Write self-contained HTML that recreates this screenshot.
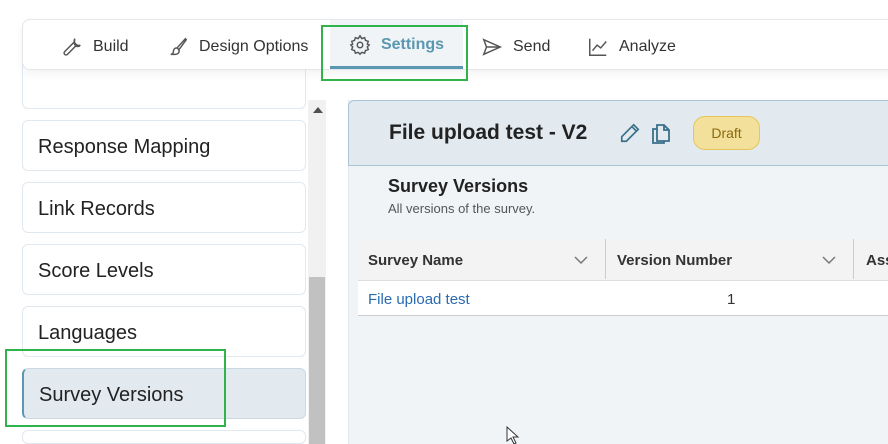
<!DOCTYPE html>
<html><head><style>
*{box-sizing:border-box;margin:0;padding:0}
html,body{width:888px;height:444px;overflow:hidden}
body{background:#fff;font-family:"Liberation Sans",sans-serif;position:relative;color:#222}
.abs{position:absolute}
.nav{left:22px;top:19px;width:900px;height:51px;border:1px solid #e3e6ea;border-radius:8px;background:#fff;box-shadow:0 4px 10px rgba(0,0,0,.05);z-index:5}
.tab{position:absolute;top:0;height:49px;display:flex;align-items:center;font-size:16px;color:#333;gap:10px;padding-top:4px}
.item{position:absolute;left:22px;width:284px;height:51px;border:1px solid #e1e8ee;border-radius:6px;background:#fff;font-size:20px;color:#222;padding-left:15px;line-height:53px}
</style></head><body>
<div class="abs nav">
 <div class="tab" style="left:38px"><svg width="22" height="22" viewBox="0 0 24 24" fill="none" stroke="#555" stroke-width="1.6"><path d="M14.7 6.3a4 4 0 0 0 5 5L21 10a5 5 0 0 1-6-7zM14.7 6.3L4 17a2 2 0 0 0 3 3l10.7-10.7"/></svg>Build</div>
 <div class="tab" style="left:144px"><svg width="22" height="22" viewBox="0 0 24 24" fill="none" stroke="#555" stroke-width="1.6"><path d="M20 3l-9 10 2 2 8-11zM11 13c-3 0-4 2-4 4s-2 3-3 3h5c3 0 5-2 4-5z"/></svg>Design Options</div>
 <div class="tab" style="left:307px;width:133px;background:#f0f4f7;border-bottom:3px solid #5b97b0;justify-content:center;color:#5b97b0;font-weight:bold;height:49px"><svg width="22" height="22" viewBox="0 0 24 24" fill="none" stroke="#555" stroke-width="1.6"><circle cx="12" cy="12" r="3"/><path d="M12 2l2 3 3-1 1 3 3 1-1 3 2 1-2 2 1 3-3 1-1 3-3-1-2 2-2-2-3 1-1-3-3-1 1-3-2-2 2-1-1-3 3-1 1-3 3 1z"/></svg>Settings</div>
 <div class="tab" style="left:458px"><svg width="22" height="22" viewBox="0 0 24 24" fill="none" stroke="#555" stroke-width="1.6"><path d="M3 4l18 8-18 8 3-8zM6 12h15"/></svg>Send</div>
 <div class="tab" style="left:564px"><svg width="22" height="22" viewBox="0 0 24 24" fill="none" stroke="#555" stroke-width="1.6"><path d="M3 3v18h18M6 16l5-6 4 3 6-7"/></svg>Analyze</div>
</div>
<div class="abs" style="left:321px;top:25px;width:147px;height:56px;border:2px solid #2fb34a;z-index:6"></div>

<div class="item" style="top:58px"></div>
<div class="item" style="top:120px">Response Mapping</div>
<div class="item" style="top:182px">Link Records</div>
<div class="item" style="top:244px">Score Levels</div>
<div class="item" style="top:306px">Languages</div>
<div class="item" style="top:368px;background:#e2eaf0;border-color:#cbd8e2;border-left:2px solid #5b97b0">Survey Versions</div>
<div class="item" style="top:430px;height:14px"></div>
<div class="abs" style="left:308px;top:100px;width:18px;height:344px;background:#f1f1f1"></div>
<div class="abs" style="left:309px;top:277px;width:16px;height:167px;background:#c1c1c1"></div>
<div class="abs" style="left:313px;top:107px;width:0;height:0;border-left:5px solid transparent;border-right:5px solid transparent;border-bottom:6px solid #505050"></div>
<div class="abs" style="left:5px;top:349px;width:221px;height:78px;border:2px solid #2fb34a"></div>

<div class="abs" style="left:348px;top:100px;width:560px;height:344px;background:#f0f4f7;border-left:1px solid #e3e8ec"></div>
<div class="abs" style="left:348px;top:100px;width:560px;height:66px;background:#e2eaf0;border:1px solid #a9c4d6;border-radius:6px 0 0 0"></div>
<div class="abs" style="left:389px;top:121px;font-size:21px;font-weight:bold;color:#222">File upload test - V2</div>
<svg class="abs" style="left:619px;top:122px" width="22" height="22" viewBox="0 0 24 24" fill="none" stroke="#3a6f8a" stroke-width="1.8"><path d="M16 3l5 5L8 21H3v-5zM14 5l5 5"/></svg>
<svg class="abs" style="left:649px;top:120px" width="24" height="26" viewBox="0 0 24 26" fill="none" stroke="#3a6f8a" stroke-width="1.8"><path d="M8 5h7l5 5v11H8zM15 5v5h5M8 9H4v14h11v-2"/></svg>
<div class="abs" style="left:693px;top:116px;width:67px;height:34px;border:1px solid #e6c65a;background:#f3e09a;border-radius:12px;color:#8a6a10;font-size:14px;text-align:center;line-height:32px">Draft</div>
<div class="abs" style="left:388px;top:176px;font-size:18px;font-weight:bold">Survey Versions</div>
<div class="abs" style="left:388px;top:201px;font-size:13px;color:#555">All versions of the survey.</div>
<div class="abs" style="left:358px;top:240px;width:540px;height:41px;background:#f3f3f3;border-bottom:1px solid #ddd"></div>
<div class="abs" style="left:605px;top:239px;width:1px;height:40px;background:#ccc"></div>
<div class="abs" style="left:853px;top:239px;width:1px;height:40px;background:#ccc"></div>
<div class="abs" style="left:368px;top:252px;font-size:15px;font-weight:bold;color:#333">Survey Name</div>
<div class="abs" style="left:617px;top:252px;font-size:15px;font-weight:bold;color:#333">Version Number</div>
<div class="abs" style="left:866px;top:252px;font-size:15px;font-weight:bold;color:#333">Ass</div>
<svg class="abs" style="left:573px;top:255px" width="16" height="10" viewBox="0 0 16 10" fill="none" stroke="#777" stroke-width="1.5"><path d="M2 2l6 6 6-6"/></svg>
<svg class="abs" style="left:821px;top:255px" width="16" height="10" viewBox="0 0 16 10" fill="none" stroke="#777" stroke-width="1.5"><path d="M2 2l6 6 6-6"/></svg>
<div class="abs" style="left:358px;top:281px;width:540px;height:35px;background:#fff;border-bottom:1px solid #ccc"></div>
<div class="abs" style="left:368px;top:291px;font-size:15px;color:#2a6bb0">File upload test</div>
<div class="abs" style="left:727px;top:291px;font-size:15px;color:#333">1</div>
<svg class="abs" style="left:505px;top:426px" width="16" height="18" viewBox="0 0 16 18" fill="#fff" stroke="#333" stroke-width="1"><path d="M2 1v14l4-3 3 6 2-1-3-6h5z"/></svg>
</body></html>
